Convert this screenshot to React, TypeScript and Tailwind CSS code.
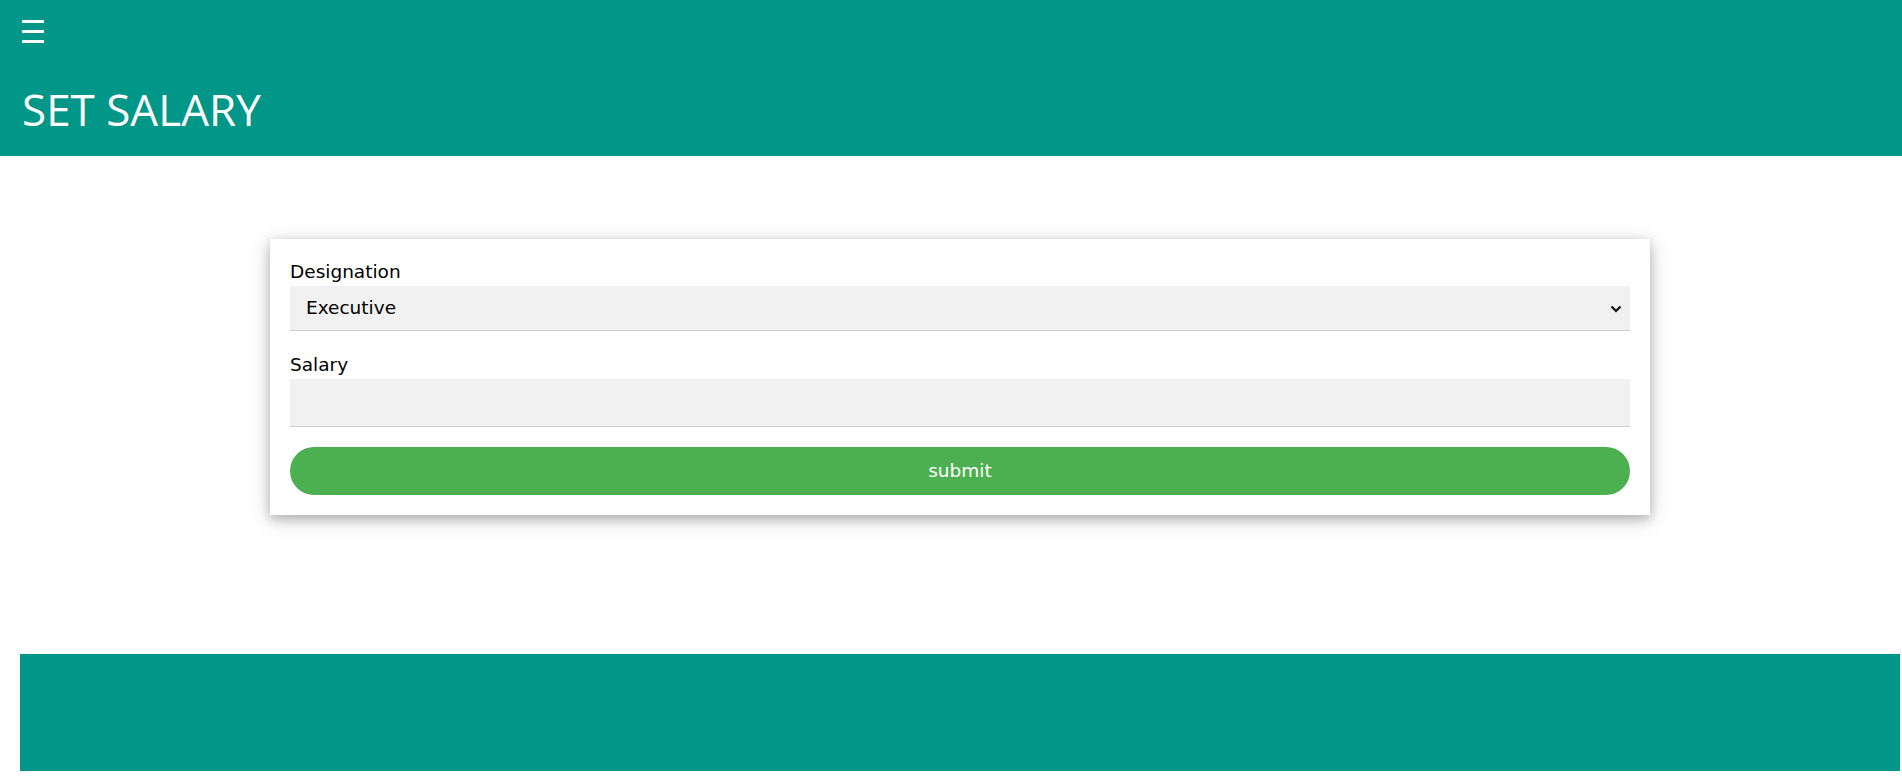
import React, { useState } from 'react';

const font = { fontFamily: '"DejaVu Sans", Verdana, sans-serif' };

export default function App() {
  const [designation, setDesignation] = useState('Executive');
  const [salary, setSalary] = useState('');

  return (
    <div className="min-h-[777px] bg-white" style={font}>
      {/* Header */}
      <header className="h-[156px] bg-[#009688] text-white px-[22px] pt-[20px]">
        <button type="button" className="flex flex-col justify-between w-[22px] h-[23px]">
          <span className="block h-[3px] w-full bg-white" />
          <span className="block h-[3px] w-full bg-white" />
          <span className="block h-[3px] w-full bg-white" />
        </button>
        <h1
          className="mt-[42px] text-[44px] leading-[48px] font-normal"
          style={{ fontFamily: '"Open Sans", "Segoe UI", sans-serif' }}
        >
          SET SALARY
        </h1>
      </header>

      {/* Form card */}
      <div className="pt-[83px] pl-[270px]">
        <form
          className="w-[1380px] bg-white px-[20px] pt-[19px] pb-[20px] shadow-[0_4px_10px_0_rgba(0,0,0,0.2),0_4px_20px_0_rgba(0,0,0,0.19)]"
          onSubmit={(e) => e.preventDefault()}
        >
          <label className="block text-[18.5px] leading-[28px] text-black">Designation</label>
          <div className="relative">
            <select
              value={designation}
              onChange={(e) => setDesignation(e.target.value)}
              className="block w-full h-[45px] appearance-none bg-[#f1f1f1] border-b border-[#cccccc] pl-[16px] text-[18.5px] text-black outline-none"
              style={font}
            >
              <option>Executive</option>
              <option>Manager</option>
              <option>Clerk</option>
            </select>
            <svg
              className="pointer-events-none absolute right-[8px] top-[18px]"
              width="12"
              height="10"
              viewBox="0 0 12 10"
            >
              <path d="M1.5 2.5 L6 7 L10.5 2.5" fill="none" stroke="#111" strokeWidth="2.2" />
            </svg>
          </div>

          <label className="block mt-[19px] text-[18.5px] leading-[29px] text-black">Salary</label>
          <input
            type="text"
            value={salary}
            onChange={(e) => setSalary(e.target.value)}
            className="block w-full h-[48px] bg-[#f1f1f1] border-b border-[#cccccc] px-[16px] text-[18.5px] outline-none"
            style={font}
          />

          <button
            type="submit"
            className="mt-[20px] w-full h-[48px] rounded-full bg-[#4caf50] text-white text-[18.5px]"
            style={font}
          >
            submit
          </button>
        </form>
      </div>

      {/* Footer */}
      <footer className="mt-[139px] ml-[20px] mr-[2px] h-[117px] bg-[#009688]" />
    </div>
  );
}
